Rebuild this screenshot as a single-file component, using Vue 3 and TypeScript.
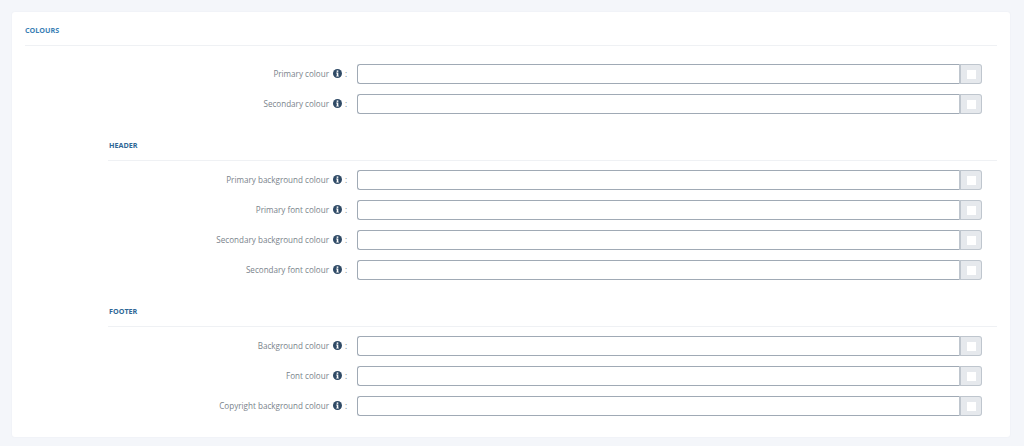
<template>
  <div class="page">
    <div class="card">
      <h3 class="section-title">COLOURS</h3>
      <div class="fields">
        <div v-for="field in mainFields" :key="field" class="form-row">
          <label class="field-label">
            <span>{{ field }}</span>
            <svg class="info" viewBox="0 0 10 10"><circle cx="5" cy="5" r="5" /><rect x="4.1" y="1.6" width="1.8" height="1.6" /><path d="M3.6 4h2.3v3.4h.6v1H3.6v-1h.6V5h-.6z" /></svg>
            <span class="colon">:</span>
          </label>
          <div class="color-input">
            <input type="text" />
            <span class="addon"><i class="swatch"></i></span>
          </div>
        </div>
      </div>

      <div v-for="group in groups" :key="group.title" class="sub-section">
        <h4 class="sub-title">{{ group.title }}</h4>
        <div class="sub-fields">
          <div v-for="field in group.fields" :key="field" class="form-row">
            <label class="field-label">
              <span>{{ field }}</span>
              <svg class="info" viewBox="0 0 10 10"><circle cx="5" cy="5" r="5" /><rect x="4.1" y="1.6" width="1.8" height="1.6" /><path d="M3.6 4h2.3v3.4h.6v1H3.6v-1h.6V5h-.6z" /></svg>
              <span class="colon">:</span>
            </label>
            <div class="color-input">
              <input type="text" />
              <span class="addon"><i class="swatch"></i></span>
            </div>
          </div>
        </div>
      </div>
    </div>
  </div>
</template>

<script setup lang="ts">
const mainFields: string[] = ['Primary colour', 'Secondary colour'];

const groups: { title: string; fields: string[] }[] = [
  {
    title: 'HEADER',
    fields: [
      'Primary background colour',
      'Primary font colour',
      'Secondary background colour',
      'Secondary font colour',
    ],
  },
  {
    title: 'FOOTER',
    fields: ['Background colour', 'Font colour', 'Copyright background colour'],
  },
];
</script>

<style>
body {
  background: #f4f6fa;
}
</style>

<style scoped>
.page {
  padding: 12px 14px 9px 12px;
  font-family: "Open Sans", "Liberation Sans", sans-serif;
}

.card {
  background: #fff;
  border-radius: 3px;
  padding: 0 13px 21px;
  box-shadow: 0 0 2px rgba(40, 60, 90, 0.05);
}

.section-title,
.sub-title {
  margin: 0;
  font-size: 7.2px;
  line-height: 11px;
  font-weight: 700;
  border-bottom: 1px solid #eff1f4;
}

.section-title {
  padding: 13px 0 9px;
  color: #3a80b5;
}

.fields {
  padding-top: 18px;
}

.sub-section {
  margin-left: 83px;
  padding-top: 26px;
}

.sub-title {
  padding: 0 0 9px 1px;
  color: #2f6796;
}

.sub-fields {
  padding-top: 9px;
}

.form-row {
  display: flex;
  align-items: center;
  height: 20px;
  margin-bottom: 10px;
}

.form-row:last-child {
  margin-bottom: 0;
}

.field-label {
  display: flex;
  align-items: center;
  justify-content: flex-end;
  width: 322px;
  flex: none;
  padding-bottom: 2px;
  font-size: 8.1px;
  color: #7a838b;
  white-space: nowrap;
}

.sub-fields .field-label {
  width: 239px;
}

.info {
  width: 9px;
  height: 9px;
  margin-left: 4px;
  flex: none;
}

.info circle {
  fill: #2f4a66;
}

.info rect,
.info path {
  fill: #fff;
}

.colon {
  margin-left: 3px;
  width: 2px;
}

.color-input {
  display: flex;
  margin-left: 10px;
  width: 625px;
  height: 20px;
}

.color-input input {
  flex: 1;
  min-width: 0;
  box-sizing: border-box;
  height: 100%;
  border: 1px solid #a0aab5;
  border-right: none;
  border-radius: 3px 0 0 3px;
  background: #fff;
  outline: none;
  padding: 0 6px;
}

.addon {
  box-sizing: border-box;
  width: 23px;
  display: flex;
  align-items: center;
  justify-content: center;
  background: #e6e9ed;
  border: 1px solid #bfc6ce;
  border-left-width: 2px;
  border-radius: 0 3px 3px 0;
}

.swatch {
  width: 9px;
  height: 9px;
  background: #fff;
}
</style>
